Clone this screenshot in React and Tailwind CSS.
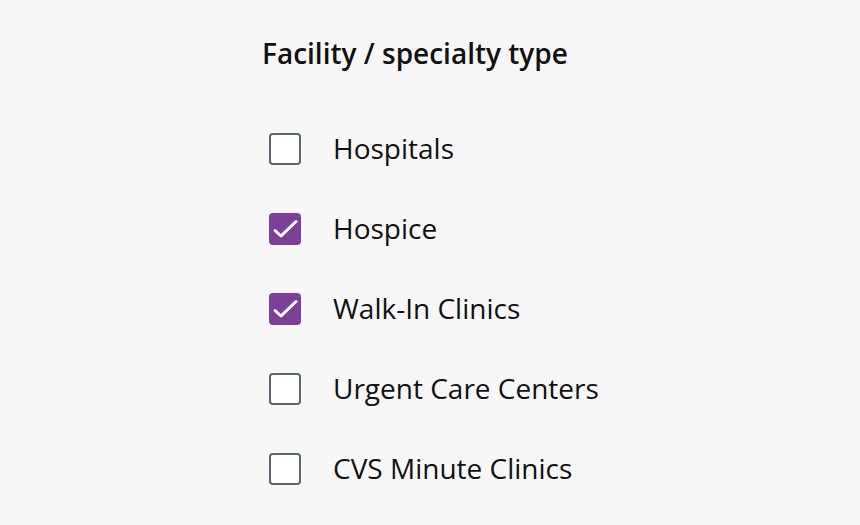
import { useState } from 'react';

const OPTIONS = [
  { id: 'hospitals', label: 'Hospitals' },
  { id: 'hospice', label: 'Hospice' },
  { id: 'walkin', label: 'Walk-In Clinics' },
  { id: 'urgent', label: 'Urgent Care Centers' },
  { id: 'cvs', label: 'CVS Minute Clinics' },
];

export default function App() {
  const [checked, setChecked] = useState({ hospice: true, walkin: true });

  const toggle = (id) => setChecked((c) => ({ ...c, [id]: !c[id] }));

  return (
    <div
      className="min-h-[525px] w-full bg-[#f7f7f7] pl-[262px] pt-[33px] text-[#111]"
      style={{ fontFamily: '"Open Sans", "Noto Sans", sans-serif' }}
    >
      <h2 className="text-[28px] font-semibold leading-[40px]">Facility / specialty type</h2>

      <div className="mt-[60px] flex flex-col gap-[48px] pl-[7px]">
        {OPTIONS.map(({ id, label }) => (
          <label key={id} className="flex h-[32px] cursor-pointer items-center gap-[32px]">
            <button
              type="button"
              onClick={() => toggle(id)}
              className={`flex h-[32px] w-[32px] items-center justify-center rounded-[4px] border-2 ${
                checked[id] ? 'border-[#7d3f98] bg-[#7d3f98]' : 'border-[#5b6670] bg-white'
              }`}
            >
              {checked[id] && (
                <svg width="28" height="28" viewBox="0 0 28 28" fill="none">
                  <path d="M4 15.5 L10 21 L25 6.5" stroke="white" strokeWidth="3" strokeLinecap="round" strokeLinejoin="round" />
                </svg>
              )}
            </button>
            <span className="-mt-[2px] text-[28px] leading-[32px]">{label}</span>
          </label>
        ))}
      </div>
    </div>
  );
}
